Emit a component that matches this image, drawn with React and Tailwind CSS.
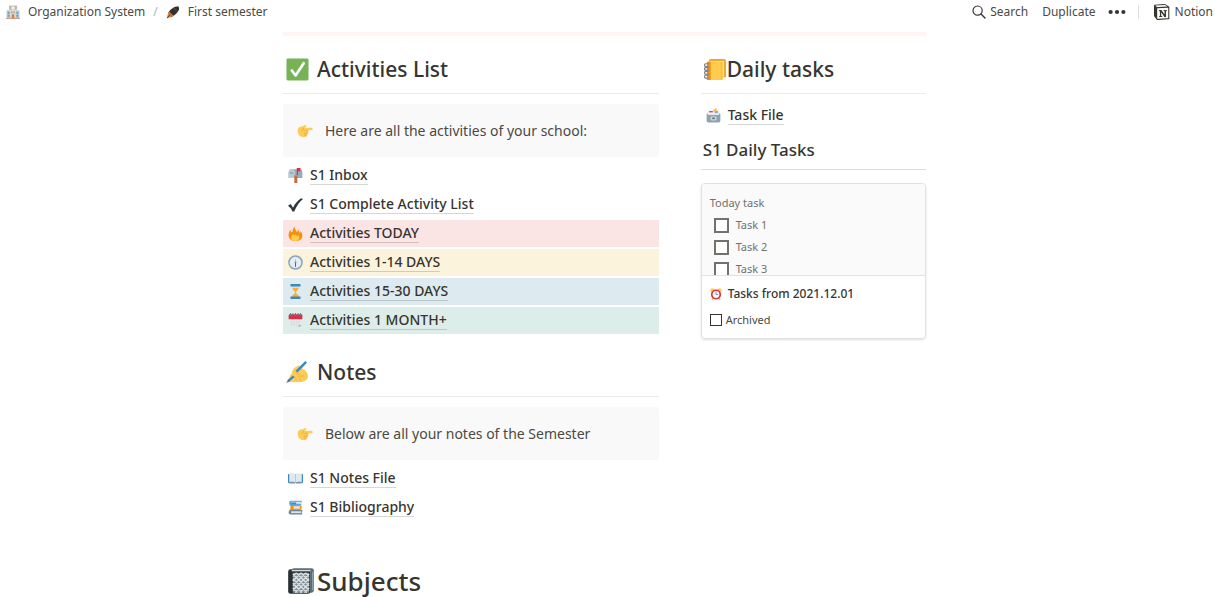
import React from 'react';

const Svg = ({ className, children, box = 24 }) => (
  <svg viewBox={`0 0 ${box} ${box}`} className={className} fill="none" aria-hidden="true">
    {children}
  </svg>
);

const SchoolIcon = ({ className }) => (
  <Svg className={className}>
    <path d="M1 9h7v14H1zM16 9h7v14h-7z" fill="#b4cad8" />
    <path d="M7 7h10v16H7z" fill="#e8d5c3" />
    <path d="M5 1h14v7H5z" fill="#c2b8ae" />
    <circle cx="12" cy="5" r="3" fill="#f4f1ec" />
    <path d="M3 12h3v3H3zM3 17h3v3H3zM18 12h3v3h-3zM18 17h3v3h-3z" fill="#5a9ecb" />
    <path d="M9 11h2v3H9zM13 11h2v3h-2z" fill="#6da4c8" />
    <path d="M10 16h4v7h-4z" fill="#c9803f" />
    <path d="M0 22h24v2H0z" fill="#d79a78" />
  </Svg>
);

const PenIcon = ({ className }) => (
  <Svg className={className}>
    <path d="M1 23l3-10 7 7z" fill="#e07b39" />
    <path d="M2 22l5-5" stroke="#4a3a32" strokeWidth="1.4" />
    <path d="M4 13C7 7 15 2 21 2c2 2 2 7-1 10-3 4-6 6-10 8z" fill="#35302e" />
    <path d="M4 13l7 7 2-1-8-8z" fill="#d9894c" />
    <path d="M13 5l6 6" stroke="#8b6a55" strokeWidth="1" />
  </Svg>
);

const CheckBoxIcon = ({ className }) => (
  <Svg className={className}>
    <rect x="0.5" y="0.5" width="23" height="23" rx="1.5" fill="#77b255" />
    <path d="M6 13l4 5.2L18.5 5.5" stroke="#fff" strokeWidth="2.8" strokeLinecap="round" strokeLinejoin="round" />
  </Svg>
);

const PointIcon = ({ className }) => (
  <Svg className={className}>
    <path
      d="M1 11c0-4 4-6 8-6 2-2 5-3 5-1 0 1-1 2-2 3h10c2 0 2 4 0 4h-6c2 1 2 3 0 4 1 1 0 3-1 3 0 2-1 3-3 3-6 1-11-2-11-10z"
      fill="#fdcb58"
    />
    <path d="M10 8c-1 2-2 3-3 3M16 11h-4M15 15h-4M14 18h-3" stroke="#eba23b" strokeWidth="1.2" strokeLinecap="round" />
  </Svg>
);

const MailboxIcon = ({ className }) => (
  <Svg className={className}>
    <path d="M6 2h11c4 0 6 2 6 5v9H1V7c0-3 2-5 5-5z" fill="#91aebd" />
    <path d="M1 7c0-3 2-5 5-5s5 2 5 5v9H1z" fill="#b8cbd4" />
    <path d="M3 8h6" stroke="#7793a2" strokeWidth="1.5" />
    <path d="M14 0h6v5h-4v6h-2z" fill="#dd2e44" />
    <path d="M10 12h5v12h-5z" fill="#c1704a" />
  </Svg>
);

const HeavyCheckIcon = ({ className }) => (
  <Svg className={className}>
    <path d="M0 14l4-3c2 2 3 4 4 6C11 11 16 5 21 2l3 1C18 8 13 15 10 23H7c-1-3-3-6-7-9z" fill="#31373d" />
  </Svg>
);

const FireIcon = ({ className }) => (
  <Svg className={className}>
    <path
      d="M1 15c0-4 1-7 3-9 0 3 1 4 2 4 2 0 1-7 5-9-1 4 3 5 3 9 1 0 2-2 1-4 2 1 3 3 4 5 1 0 1-1 1-3 2 2 3 5 3 8 0 5-5 8-11 8S1 20 1 15z"
      fill="#f4900c"
    />
    <path d="M5 19c0-3 2-4 3-6 1 2 2 3 3 0 3 1 3 3 4 4 1-1 1-2 1-3 3 3 4 9-4 10-4 0-7-2-7-5z" fill="#ffcc4d" />
  </Svg>
);

const ClockIcon = ({ className }) => (
  <Svg className={className}>
    <circle cx="12" cy="12" r="10.5" fill="#e4edf3" stroke="#8ba5b5" strokeWidth="2.4" />
    <path d="M12 11v8" stroke="#3f6d8c" strokeWidth="1.6" />
    <path d="M12 12V7" stroke="#9cb3c1" strokeWidth="1.4" />
    <circle cx="12" cy="12" r="1.4" fill="#5c7f95" />
  </Svg>
);

const HourglassIcon = ({ className }) => (
  <Svg className={className}>
    <path d="M6 3h12c0 5-1 7-5 9 4 2 5 5 5 9H6c0-4 1-7 5-9-4-2-5-4-5-9z" fill="#dce8ee" />
    <path d="M7 6h10c-1 4-3 5-4 6v3c3 1 5 4 5 6H6c0-2 2-5 5-6v-3C9 11 8 10 7 6z" fill="#ffac33" />
    <path d="M4 0h16v4H4zM4 20h16v4H4z" fill="#3b88c3" />
  </Svg>
);

const CalendarIcon = ({ className }) => (
  <Svg className={className}>
    <path d="M2 8h20v13a2 2 0 01-2 2H4a2 2 0 01-2-2z" fill="#e6eaee" />
    <path d="M1 4a2 2 0 012-2h18a2 2 0 012 2v6H1z" fill="#d83145" />
    <path d="M4 0v5M8 0v5M12 0v5M16 0v5M20 0v5" stroke="#66757f" strokeWidth="1.5" />
    <path d="M6 12v10M10 12v10M14 12v10M18 12v10M3 14h18M3 18h18" stroke="#ccd4da" strokeWidth="0.8" />
    <path d="M17 23v-4h5z" fill="#a9b6bf" />
  </Svg>
);

const WritingIcon = ({ className }) => (
  <Svg className={className}>
    <path d="M4 20c-1-3 0-5 2-7 0-3 3-7 7-8 3-1 5 1 4 3 3 1 6 4 6 8s-4 6-9 6c-4 0-8 1-10-2z" fill="#fdcb58" />
    <path d="M9 10l6 6 3-1M9 16l2 4M13 16l2 4" stroke="#efad42" strokeWidth="0.9" strokeLinecap="round" />
    <path d="M11 11L21 1" stroke="#3b88c3" strokeWidth="2.6" />
    <path d="M2 21l6-5" stroke="#3b88c3" strokeWidth="2.4" />
    <path d="M0 23l3-4 2 2z" fill="#66757f" />
  </Svg>
);

const OpenBookIcon = ({ className }) => (
  <Svg className={className}>
    <path d="M0 5h24v14H0z" fill="#3b88c3" />
    <path d="M2 4c4-1 8-1 10 2v13c-2-2-7-2-10-1zM22 4c-4-1-8-1-10 2v13c2-2 7-2 10-1z" fill="#dfe9f0" />
    <path d="M2 18c4-1 8-1 10 2 2-3 6-3 10-2v2H2z" fill="#7d94a3" />
    <path d="M12 6v13" stroke="#a2b5c1" />
  </Svg>
);

const BooksIcon = ({ className }) => (
  <Svg className={className}>
    <path d="M4 1h18v3l-2 1 2 3H4C1 8 1 1 4 1z" fill="#55acee" />
    <path d="M5 3h16v3H5z" fill="#dbe7ef" />
    <path d="M2 8h17c4 0 4 8 0 8H2l2-2v-4z" fill="#f4900c" />
    <path d="M9 10h10v4H9z" fill="#e4e8eb" />
    <path d="M4 16h19v2l-1 1 1 4H4c-4 0-4-7 0-7z" fill="#718695" />
    <path d="M5 18h16v3H5z" fill="#d9e4eb" />
    <path d="M5 4h8v3H5z" fill="#3b88c3" />
  </Svg>
);

const NotebookIcon = ({ className }) => (
  <Svg className={className}>
    <rect x="4" y="1" width="19" height="21" rx="2" fill="#5c6b73" />
    <path d="M5 3h15v18H5z" fill="#d5e3ea" />
    <rect x="1" y="2" width="19" height="21" rx="2" fill="#292f33" />
    <path d="M4 3h16" stroke="#d5dde2" strokeWidth="1.4" />
    <path d="M5 5h14v17H5z" fill="#87949c" />
    <path
      d="M5 8l3-3M5 12l7-7M5 16L16 5M5 20L19 6M7 22l12-12M11 22l8-8M15 22l4-4M16 5l3 3M12 5l7 7M8 5l11 11M5 6l14 14M5 10l12 12M5 14l8 8M5 18l4 4"
      stroke="#e2e8ec"
      strokeWidth="1.1"
    />
    <path d="M22 4v16" stroke="#8da3af" strokeWidth="1" />
  </Svg>
);

const LedgerIcon = ({ className }) => (
  <Svg className={className}>
    <path d="M6 1h15a2 2 0 012 2v17h-3L4 5z" fill="#f4a32b" />
    <path d="M7 3h14v16l-2 1L5 4z" fill="#dce4e9" />
    <path d="M4 4h15a1 1 0 011 1v17a1 1 0 01-1 1H3V5z" fill="#ffcc4d" />
    <path d="M3 4h4v19H3z" fill="#f4900c" />
    <path d="M18 5v17" stroke="#f0a935" strokeWidth="1" strokeDasharray="1 1" />
    <path
      d="M5 6H2a1.4 1.4 0 000 3h3M5 10H2a1.4 1.4 0 000 3h3M5 14H2a1.4 1.4 0 000 3h3M5 18H2a1.4 1.4 0 000 3h3"
      stroke="#7b8790"
      strokeWidth="1.3"
    />
  </Svg>
);

const FileBoxIcon = ({ className }) => (
  <Svg className={className}>
    <path d="M3 4h18v10H3z" fill="#e1e8ed" />
    <path d="M4 3h8l1 6H4z" fill="#f5f8fa" />
    <path d="M11 3l5-3 4 7h-7z" fill="#ffc266" />
    <path d="M5 5h6v2H5z" fill="#dd2e44" />
    <path d="M14 5h5v3h-5z" fill="#77b6e3" />
    <path d="M1 10l2-2v3h18V8l2 2v10a3 3 0 01-3 3H4a3 3 0 01-3-3z" fill="#8fa2af" />
    <rect x="7" y="13" width="10" height="7" rx="3" fill="#ccd6dd" />
    <rect x="10" y="15" width="4" height="3" fill="#66757f" />
  </Svg>
);

const AlarmIcon = ({ className }) => (
  <Svg className={className}>
    <circle cx="5" cy="5" r="4.5" fill="#ffcc4d" />
    <circle cx="19" cy="5" r="4.5" fill="#ffcc4d" />
    <path d="M4 23l3-4M20 23l-3-4" stroke="#ffac33" strokeWidth="3" />
    <circle cx="12" cy="13" r="8.5" fill="#f5f8fa" stroke="#dd2e44" strokeWidth="3.4" />
    <path d="M12 8v5h4" stroke="#66757f" strokeWidth="1.5" />
  </Svg>
);

const SearchIcon = ({ className }) => (
  <Svg className={className} box={14}>
    <circle cx="5.6" cy="5.6" r="4.6" stroke="#37352f" strokeWidth="1.2" />
    <path d="M9 9l4 4" stroke="#37352f" strokeWidth="1.4" strokeLinecap="round" />
  </Svg>
);

const DotsIcon = ({ className }) => (
  <svg viewBox="0 0 18 6" className={className} fill="#37352f" aria-hidden="true">
    <circle cx="2.6" cy="3" r="2.1" />
    <circle cx="9" cy="3" r="2.1" />
    <circle cx="15.4" cy="3" r="2.1" />
  </svg>
);

const NotionIcon = ({ className }) => (
  <Svg className={className} box={100}>
    <path
      d="M6 4.3l55.3-4c6.8-.6 8.5-.2 12.8 2.9l17.7 12.4c2.9 2.1 3.9 2.7 3.9 5.1v68.2c0 4.3-1.6 6.8-7 7.2l-64.3 3.9c-4 .2-6-.4-8-3.1L3.3 80C1 77 0 74.7 0 72V11.1C0 7.6 1.6 4.7 6 4.3z"
      fill="#fff"
    />
    <path
      fillRule="evenodd"
      clipRule="evenodd"
      d="M61.4.2L6 4.3C1.6 4.7 0 7.6 0 11.1v60.7c0 2.7 1 5 3.3 8.1l13 16.9c2.1 2.7 4.1 3.3 8.2 3.1l64.3-3.9c5.4-.4 7-2.9 7-7.2V20.7c0-2.2-.9-2.9-3.5-4.8L74.2 3.1C69.9 0 68.2-.4 61.4.2zM25.9 19.5c-5.2.4-6.4.4-9.5-2L8.7 11.4c-.8-.8-.4-1.8 1.6-2l53.2-3.9c4.5-.4 6.8 1.2 8.5 2.500l9.2 6.6c.3.2 1.3 1.4.1 1.400l-55 3.300zM19.800 88.300V30.400c0-2.500.8-3.700 3.100-3.900L86 22.800c2.100-.2 3.100 1.200 3.100 3.700v57.500c0 2.500-.4 4.700-3.900 4.900L24.800 92.400c-3.500.2-5-1-5-4.100z"
      fill="#37352f"
    />
    <path
      d="M32 38l14-1 20 29V45l-6-1v-5l20-1v5l-5 2v37l-9 1-21-32v23l7 2v5l-20 1v-5l5-2V45l-5-1z"
      fill="#37352f"
    />
  </Svg>
);

const activities = [
  { label: 'S1 Inbox', Icon: MailboxIcon, bg: '' },
  { label: 'S1 Complete Activity List', Icon: HeavyCheckIcon, bg: '' },
  { label: 'Activities TODAY', Icon: FireIcon, bg: 'bg-[#fbe4e4]' },
  { label: 'Activities 1-14 DAYS', Icon: ClockIcon, bg: 'bg-[#fbf3db]' },
  { label: 'Activities 15-30 DAYS', Icon: HourglassIcon, bg: 'bg-[#ddebf1]' },
  { label: 'Activities 1 MONTH+', Icon: CalendarIcon, bg: 'bg-[#ddedea]' },
];

const notes = [
  { label: 'S1 Notes File', Icon: OpenBookIcon, bg: '' },
  { label: 'S1 Bibliography', Icon: BooksIcon, bg: '' },
];

const tasks = ['Task 1', 'Task 2', 'Task 3'];

const SectionTitle = ({ Icon, gap = 'gap-2', children }) => (
  <h2 className={`flex h-12 items-center border-b border-[#ebebea] px-[3px] text-[21px] font-medium ${gap}`}>
    <Icon className="size-[23px] shrink-0" />
    {children}
  </h2>
);

const Callout = ({ children }) => (
  <div className="mt-2.5 flex items-center gap-3 rounded-xs bg-[#f9f9f9] px-3.5 py-4 text-sm leading-[21px] text-[#4b4944]">
    <PointIcon className="size-4 shrink-0" />
    <p>{children}</p>
  </div>
);

const PageLink = ({ label, Icon, bg }) => (
  <li className={`flex h-[27px] items-center gap-[7px] px-[5px] ${bg}`}>
    <Icon className="size-[15px] shrink-0" />
    <a href="#" className="border-b border-[#37352f]/20 text-sm leading-[18px] font-medium">
      {label}
    </a>
  </li>
);

const LinkList = ({ items }) => (
  <ul className="mt-[5px] flex flex-col gap-0.5">
    {items.map((item) => (
      <PageLink key={item.label} {...item} />
    ))}
  </ul>
);

const TopBar = () => (
  <header className="flex h-6 shrink-0 items-center justify-between pr-0.5 pl-1.5 text-xs text-[#4b4944]">
    <nav className="flex items-center">
      <a href="#" className="flex items-center gap-2">
        <SchoolIcon className="size-3.5" />
        Organization System
      </a>
      <span className="mx-2 text-[#b5b4b1]">/</span>
      <a href="#" className="flex items-center gap-2">
        <PenIcon className="size-3.5" />
        First semester
      </a>
    </nav>
    <div className="flex items-center">
      <button type="button" className="flex items-center gap-1">
        <SearchIcon className="size-3.5" />
        Search
      </button>
      <button type="button" className="ml-3.5">Duplicate</button>
      <button type="button" aria-label="More" className="ml-3">
        <DotsIcon className="h-1.5 w-[18px]" />
      </button>
      <span className="mr-[15px] ml-3 h-3.5 border-l border-[#dddddb]" />
      <a href="#" className="flex items-center gap-[5px]">
        <NotionIcon className="size-4" />
        Notion
      </a>
    </div>
  </header>
);

const TaskCard = () => (
  <div className="mt-[13px] overflow-hidden rounded-sm border border-[#e1e1df] shadow-sm">
    <div className="h-[92px] overflow-hidden border-b border-[#e1e1df] bg-[#fafafa] px-2 pt-2 text-[11px] text-[#73716c]">
      <p className="leading-[22px]">Today task</p>
      {tasks.map((task) => (
        <label key={task} className="flex h-[22px] items-center gap-[7px] pl-1">
          <input type="checkbox" className="size-[15px] appearance-none border-2 border-[#73716c] bg-white" />
          {task}
        </label>
      ))}
    </div>
    <div className="px-2 py-2">
      <a href="#" className="flex items-center gap-1.5 text-xs leading-5 font-medium">
        <AlarmIcon className="size-3" />
        Tasks from 2021.12.01
      </a>
      <label className="mt-1.5 flex items-center gap-1 text-[11px] leading-5 text-[#4b4944]">
        <input type="checkbox" className="size-3 appearance-none border border-[#37352f] bg-white" />
        Archived
      </label>
    </div>
  </div>
);

const App = () => {
  return (
    <div className="flex h-screen flex-col overflow-hidden bg-white font-['Noto_Sans','Open_Sans',sans-serif] text-[#37352f]">
      <TopBar />
      <main className="mt-2 w-full pr-1.5">
        <div className="mx-auto max-w-[643px]">
          <div className="h-1 bg-[#fff5f4]" />
          <div className="mt-2.5 grid grid-cols-[5fr_3fr] gap-[42px]">
            <section>
              <SectionTitle Icon={CheckBoxIcon}>Activities List</SectionTitle>
              <Callout>Here are all the activities of your school:</Callout>
              <LinkList items={activities} />
              <div className="mt-[15px]">
                <SectionTitle Icon={WritingIcon}>Notes</SectionTitle>
              </div>
              <Callout>Below are all your notes of the Semester</Callout>
              <LinkList items={notes} />
            </section>
            <section>
              <SectionTitle Icon={LedgerIcon} gap="gap-0">Daily tasks</SectionTitle>
              <ul className="mt-2">
                <PageLink label="Task File" Icon={FileBoxIcon} bg="" />
              </ul>
              <h3 className="mt-[3px] border-b border-[#dededc] px-0.5 pt-1 pb-[5px] text-[17px] leading-7 font-medium">
                S1 Daily Tasks
              </h3>
              <TaskCard />
            </section>
          </div>
          <h1 className="mt-10 flex items-center gap-0.5 px-1 text-[26px] leading-10 font-medium">
            <NotebookIcon className="size-7" />
            Subjects
          </h1>
        </div>
      </main>
    </div>
  );
};

export default App;
